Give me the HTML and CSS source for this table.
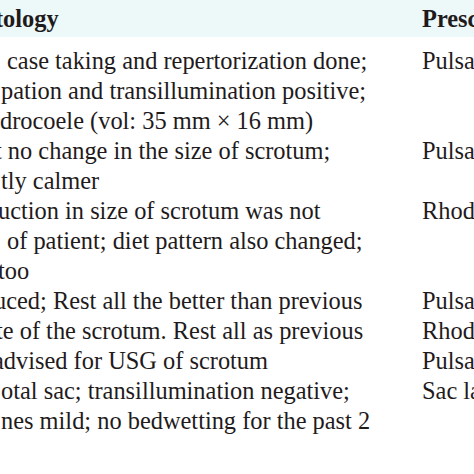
FILE: index.html
```html
<!DOCTYPE html>
<html>
<head>
<meta charset="utf-8">
<link rel="stylesheet" href="styles.css">
</head>
<body>
<div class="sheet">
  <div class="head">
    <div class="c1"><span class="cut5">tology</span></div>
    <div class="c2">Prescription</div>
  </div>
  <div class="body">
    <div class="row">
      <div class="c1">
        <div class="ln in7">case taking and repertorization done;</div>
        <div class="ln in1">pation and transillumination positive;</div>
        <div class="ln">drocoele (vol: 35 mm × 16 mm)</div>
      </div>
      <div class="c2">Pulsatilla</div>
    </div>
    <div class="row">
      <div class="c1">
        <div class="ln cut5">t no change in the size of scrotum;</div>
        <div class="ln in1">tly calmer</div>
      </div>
      <div class="c2">Pulsatilla</div>
    </div>
    <div class="row">
      <div class="c1">
        <div class="ln cut2">uction in size of scrotum was not</div>
        <div class="ln in7">of patient; diet pattern also changed;</div>
        <div class="ln cut2">too</div>
      </div>
      <div class="c2">Rhododendron</div>
    </div>
    <div class="row">
      <div class="c1"><div class="ln cut6">uced; Rest all the better than previous</div></div>
      <div class="c2">Pulsatilla</div>
    </div>
    <div class="row">
      <div class="c1"><div class="ln cut4">te of the scrotum. Rest all as previous</div></div>
      <div class="c2">Rhododendron</div>
    </div>
    <div class="row">
      <div class="c1"><div class="ln cut7">advised for USG of scrotum</div></div>
      <div class="c2">Pulsatilla</div>
    </div>
    <div class="row">
      <div class="c1">
        <div class="ln in1">otal sac; transillumination negative;</div>
        <div class="ln in1">nes mild; no bedwetting for the past 2</div>
      </div>
      <div class="c2">Sac lac</div>
    </div>
  </div>
</div>
</body>
</html>
```

FILE: styles.css
```css
html, body {
  margin: 0;
  padding: 0;
  background: #ffffff;
  overflow: hidden;
}
.sheet {
  width: 474px;
  height: 474px;
  overflow: hidden;
  font-family: "Liberation Serif", "DejaVu Serif", serif;
  font-size: 24.4px;
  line-height: 30px;
  color: #1f1b1c;
}
.head {
  display: flex;
  background: #edf8f8;
  height: 37px;
  align-items: center;
  font-weight: bold;
  white-space: nowrap;
  padding-top: 1px;
  box-sizing: border-box;
}
.body {
  padding-top: 9px;
}
.row {
  display: flex;
  white-space: nowrap;
}
.c1 {
  width: 422px;
  flex: none;
  overflow: hidden;
}
.c2 {
  flex: none;
  white-space: nowrap;
}
.ln {
  white-space: nowrap;
}
.in7 { padding-left: 7px; }
.in1 { padding-left: 1px; }
.cut2 { display: inline-block; margin-left: -2px; }
.cut4 { display: inline-block; margin-left: -4px; }
.cut5 { display: inline-block; margin-left: -5px; }
.cut6 { display: inline-block; margin-left: -6px; }
.cut7 { display: inline-block; margin-left: -7px; }
```
